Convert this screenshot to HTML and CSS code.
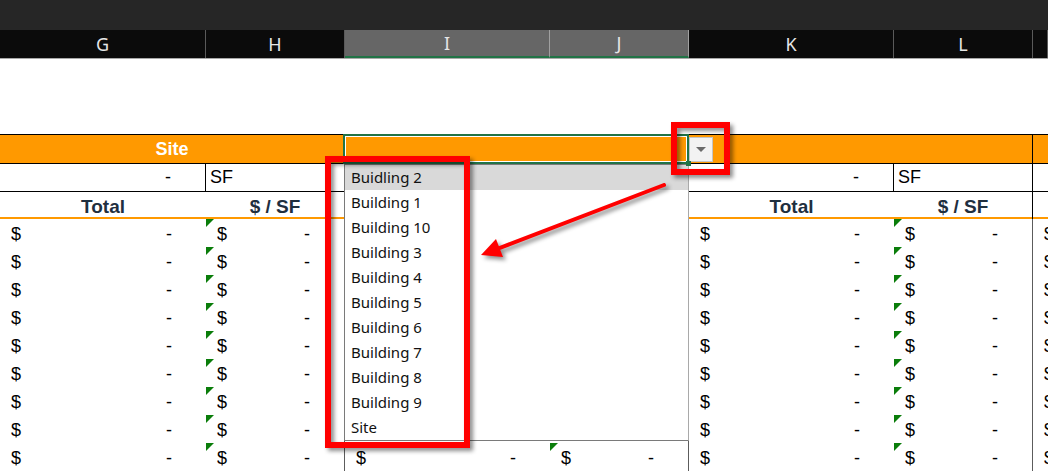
FILE: index.html
```html
<!DOCTYPE html>
<html lang="en">
<head>
    <meta charset="UTF-8">
    <meta name="viewport" content="width=device-width, initial-scale=1.0">
    <title>Cost Summary - Data Validation</title>
    <link rel="stylesheet" href="styles.css">
</head>
<body>

<div class="app">
    <div class="titlebar"></div>

    <div class="colhead">
        <div class="ch">G</div>
        <div class="ch">H</div>
        <div class="ch sel">I</div>
        <div class="ch sel">J</div>
        <div class="ch">K</div>
        <div class="ch">L</div>
        <div class="ch"></div>
    </div>

    <div class="gap"></div>

    <div class="sheet" id="sheet">
        <div class="row row-title">
            <div class="c span2 edge title">Site</div>
            <div class="c span2 edge active"><span class="handle"></span></div>
            <div class="c span2 edge"></div>
            <div class="c"></div>
        </div>
        <!-- columns I and J sit under the open list, so they stay empty here -->
        <div class="row row-sf">
            <div class="c edge num">-</div>
            <div class="c edge unit">SF</div>
            <div class="c edge"></div>
            <div class="c edge"></div>
            <div class="c edge num">-</div>
            <div class="c edge unit">SF</div>
            <div class="c"></div>
        </div>
        <div class="row row-head">
            <div class="c head">Total</div>
            <div class="c edge head">$ / SF</div>
            <div class="c"></div>
            <div class="c edge"></div>
            <div class="c head">Total</div>
            <div class="c edge head">$ / SF</div>
            <div class="c"></div>
        </div>
    </div>

    <!-- data validation dropdown -->
    <div class="dv-button"><span class="caret"></span></div>
    <ul class="dv-list">
        <li class="hl">Buidling 2</li>
        <li>Building 1</li>
        <li>Building 10</li>
        <li>Building 3</li>
        <li>Building 4</li>
        <li>Building 5</li>
        <li>Building 6</li>
        <li>Building 7</li>
        <li>Building 8</li>
        <li>Building 9</li>
        <li>Site</li>
    </ul>

    <!-- annotations -->
    <div class="callout callout-list"></div>
    <div class="callout callout-button"></div>
    <svg class="arrow" width="1048" height="471" viewBox="0 0 1048 471">
        <line x1="664" y1="185" x2="497" y2="249" stroke="#ff0000" stroke-width="4" stroke-linecap="round"/>
        <polygon points="481,255 503,257 496,239" fill="#ff0000"/>
    </svg>
</div>

<script>
    const sheet = document.getElementById('sheet');
    const amt = '<span>$</span><span>-</span>';
    for (let i = 0; i < 10; i++) {
        // rows 0-7 of columns I/J are hidden behind the list
        const hidden = i < 8;
        const mid = hidden
            ? '<div class="c"></div><div class="c flag soft"></div>'
            : '<div class="c amt">' + amt + '</div><div class="c amt flag soft">' + amt + '</div>';
        const row = document.createElement('div');
        row.className = 'row row-data';
        row.innerHTML =
            '<div class="c amt">' + amt + '</div>' +
            '<div class="c amt flag soft">' + amt + '</div>' +
            mid +
            '<div class="c amt">' + amt + '</div>' +
            '<div class="c amt flag soft">' + amt + '</div>' +
            '<div class="c amt"><span>$</span></div>';
        sheet.appendChild(row);
    }
</script>

</body>
</html>
```

FILE: styles.css
```css
body {
    margin: 0;
    padding: 0;
    background-color: #fff;
    font-family: 'Liberation Sans', Arial, sans-serif;
    color: #000;
    overflow: hidden;
}
.app {
    position: relative;
    width: 1048px;
    height: 471px;
    overflow: hidden;
}
.titlebar {
    height: 30px;
    background-color: #262626;
}
.colhead,
.row {
    display: grid;
    grid-template-columns: 206px 139px 205px 139px 205px 139px 1fr;
}
.colhead {
    height: 29px;
    box-sizing: border-box;
    background-color: #0b0b0b;
    border-bottom: 1px solid #a8a8a8;
}
.ch {
    box-sizing: border-box;
    border-right: 1px solid #5a5a5a;
    color: #e6e6e6;
    font-family: 'Noto Sans', sans-serif;
    font-size: 18px;
    display: flex;
    align-items: center;
    justify-content: center;
}
.ch.sel {
    background-color: #666;
    border-right-color: #a0a0a0;
    border-bottom: 2px solid #217346;
}
.gap {
    height: 75px;
}
.c {
    box-sizing: border-box;
    position: relative;
    white-space: nowrap;
}
.span2 {
    grid-column: span 2;
}
.edge {
    border-right: 1px solid #000;
}
.soft {
    border-right: 1px solid #5c5c5c;
}
.row-title {
    height: 30px;
    box-sizing: border-box;
    border-top: 1px solid #000;
    border-bottom: 1px solid #000;
    background-color: #ff9900;
}
.title {
    color: #fff;
    font-weight: bold;
    font-size: 18px;
    line-height: 28px;
    text-align: center;
}
.active::after {
    content: '';
    position: absolute;
    left: -2px;
    top: -1px;
    right: -1px;
    bottom: -1px;
    border: 2px solid #217346;
    box-shadow: inset 0 0 0 1px #fff;
}
.handle {
    position: absolute;
    right: -3px;
    bottom: -3px;
    width: 5px;
    height: 5px;
    background-color: #217346;
    z-index: 1;
}
.row-sf {
    height: 28px;
    box-sizing: border-box;
    border-bottom: 1px solid #000;
    font-size: 18px;
    line-height: 27px;
}
.num {
    text-align: right;
    padding-right: 34px;
}
.unit {
    padding-left: 4px;
}
.row-head {
    height: 27px;
    box-sizing: border-box;
    border-bottom: 2px solid #ff9900;
}
.head {
    font-size: 19px;
    font-weight: bold;
    color: #1f2f3f;
    line-height: 29px;
    text-align: center;
}
.row-data {
    height: 28px;
    font-size: 18px;
    line-height: 31px;
}
.amt {
    display: flex;
    justify-content: space-between;
    padding: 0 34px 0 11px;
}
.flag::before {
    content: '';
    position: absolute;
    left: 0;
    top: 0;
    border-top: 8px solid #0a7d0a;
    border-right: 8px solid transparent;
}

/* dropdown */
.dv-button {
    position: absolute;
    left: 689px;
    top: 137px;
    width: 24px;
    height: 25px;
    box-sizing: border-box;
    background-color: #f2f2f2;
    border: 1px solid #c4c4c4;
    display: flex;
    align-items: center;
    justify-content: center;
}
.caret {
    width: 0;
    height: 0;
    border-left: 5px solid transparent;
    border-right: 5px solid transparent;
    border-top: 5px solid #6a6a6a;
}
.dv-list {
    position: absolute;
    left: 344px;
    top: 164px;
    width: 345px;
    height: 277px;
    box-sizing: border-box;
    margin: 0;
    padding: 0;
    list-style: none;
    background-color: #fff;
    border: 1px solid #7a7a7a;
    border-right-color: #a9a9a9;
    font-family: 'Noto Sans', sans-serif;
    font-size: 15px;
    color: #111;
}
.dv-list li {
    height: 25px;
    line-height: 25px;
    padding-left: 6px;
}
.dv-list li.hl {
    background-color: #d9d9d9;
}

/* red callouts */
.callout {
    position: absolute;
    box-sizing: border-box;
    border: 6px solid #ff0000;
    filter: drop-shadow(3px 3px 2px rgba(0, 0, 0, 0.45));
}
.callout-list {
    left: 325px;
    top: 156px;
    width: 145px;
    height: 292px;
}
.callout-button {
    left: 671px;
    top: 122px;
    width: 59px;
    height: 53px;
}
.arrow {
    position: absolute;
    left: 0;
    top: 0;
    filter: drop-shadow(3px 3px 2px rgba(0, 0, 0, 0.45));
}
```
